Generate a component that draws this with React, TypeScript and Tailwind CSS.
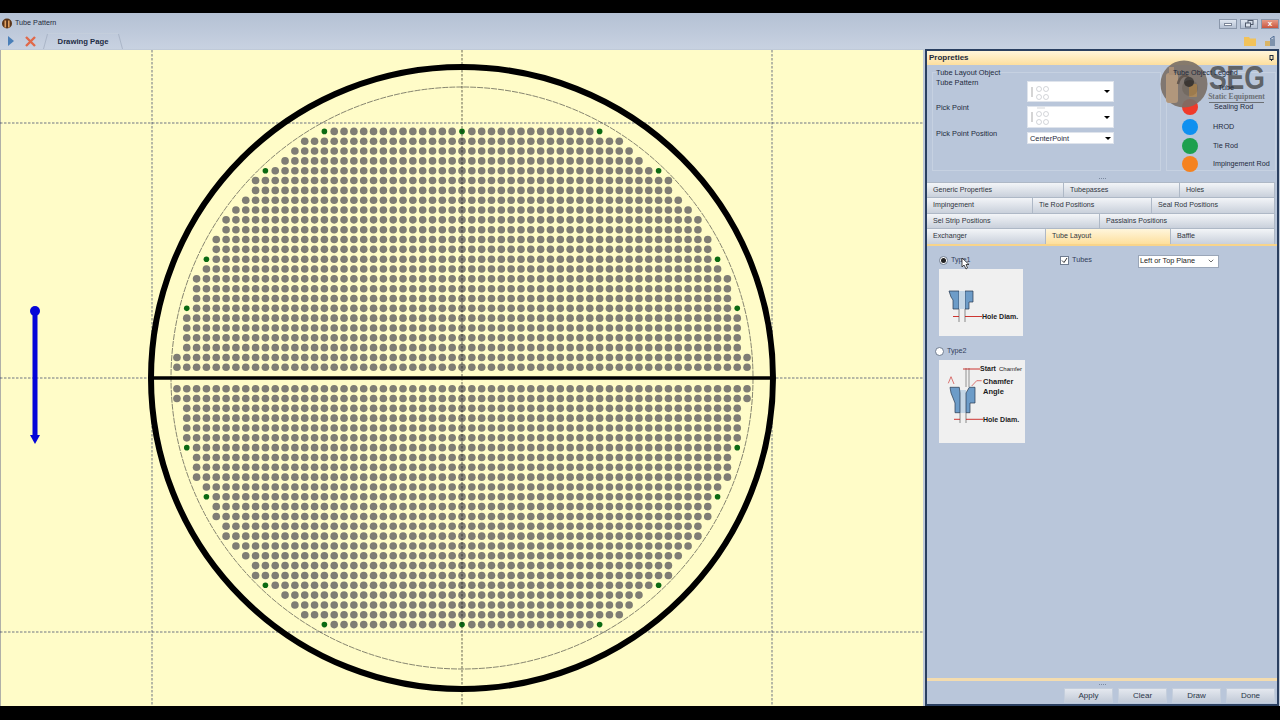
import { ChevronDown } from "lucide-react"

// leftmost column (in pitches from centre) for each tube row, top row first
const rowStart = [14, 16, 17, 18, 20, 21, 21, 22, 23, 24, 24, 25, 25, 26, 26, 27, 27, 27, 28, 28, 28, 28, 28, 29, 29]
const greenRows = [0, 4, 13, 18]
const PITCH = 9.83
const CX = 462
const CY = 378

function tubeDots() {
  const dots: { x: number; y: number; green: boolean }[] = []
  rowStart.forEach((start, r) => {
    const up = 131.4 + r * PITCH
    const down = 624.6 - r * PITCH
    for (let k = -start; k <= start; k++) {
      const green = (greenRows.includes(r) && Math.abs(k) === start) || (r === 0 && k === 0)
      const x = CX + k * PITCH
      dots.push({ x, y: up, green })
      dots.push({ x, y: down, green })
    }
  })
  return dots
}

function Drawing() {
  const dots = tubeDots()
  return (
    <svg viewBox="0 50 923 656" className="w-[923px] h-[656px] shrink-0 bg-[#fffcc8] mt-px">
      <line x1="0.5" y1="50" x2="0.5" y2="706" stroke="#b0b0a8" />
      {dots.map((d, i) => (
        <circle key={i} cx={d.x} cy={d.y} r={d.green ? 2.8 : 3.8} fill={d.green ? "#0b6a12" : "#7f7d74"} />
      ))}
      <g stroke="#2f3a66" strokeWidth="0.7" strokeDasharray="2.5 1.5" fill="none">
        <line x1="0" y1="123" x2="923" y2="123" />
        <line x1="0" y1="378" x2="923" y2="378" />
        <line x1="0" y1="632" x2="923" y2="632" />
        <line x1="152" y1="50" x2="152" y2="706" />
        <line x1="772" y1="50" x2="772" y2="706" />
      </g>
      <line x1={CX} y1="50" x2={CX} y2="706" stroke="#222" strokeWidth="0.7" strokeDasharray="2.5 1.5" />
      <circle cx={CX} cy={CY} r="291" fill="none" stroke="#333" strokeWidth="0.6" strokeDasharray="6 1" />
      <circle cx={CX} cy={CY} r="311" fill="none" stroke="#000" strokeWidth="6" />
      <line x1="150" y1={CY} x2="775" y2={CY} stroke="#000" strokeWidth="3.5" />
      <line x1="35" y1="312" x2="35" y2="436" stroke="#0505d8" strokeWidth="5" />
      <circle cx="35" cy="311" r="5" fill="#0505d8" />
      <path d="M30 435 H40 L35 444 Z" fill="#0505d8" />
    </svg>
  )
}

function WindowButton({ kind }: { kind: "min" | "max" | "close" }) {
  const bg = kind === "close" ? "bg-gradient-to-b from-[#e69a86] to-[#c8553f]" : "bg-gradient-to-b from-[#dfe6f0] to-[#b4c0d2]"
  return (
    <div className={`w-[18px] h-[10px] border border-[#8a97ab] flex items-center justify-center ${bg}`}>
      {kind === "min" && <div className="w-[8px] h-[3px] border border-[#7c8698] bg-white" />}
      {kind === "max" && (
        <svg width="9" height="8" viewBox="0 0 9 8" fill="none" stroke="#4f596b">
          <rect x="3" y="0.5" width="5" height="4" />
          <rect x="0.5" y="3" width="5" height="4" fill="#dfe6f0" />
        </svg>
      )}
      {kind === "close" && <span className="text-white text-[8px] leading-none font-bold">x</span>}
    </div>
  )
}

function TitleBar() {
  return (
    <div className="h-[20px] flex items-center bg-gradient-to-b from-[#b4c1d4] to-[#bfcadb] pl-[2px] pr-px">
      <svg width="10" height="11" viewBox="0 0 10 11">
        <circle cx="5" cy="5.5" r="5" fill="#5a3418" />
        <rect x="2.5" y="2.5" width="1.6" height="7" fill="#e0a060" />
        <rect x="6" y="2.5" width="1.6" height="7" fill="#e0a060" />
      </svg>
      <span className="ml-[3px] text-[7.2px] text-[#1e2a3c]">Tube Pattern</span>
      <div className="ml-auto flex gap-[3px] mt-[2px]">
        <WindowButton kind="min" />
        <WindowButton kind="max" />
        <WindowButton kind="close" />
      </div>
    </div>
  )
}

function Toolbar() {
  return (
    <div className="h-[16px] flex items-center bg-gradient-to-b from-[#bfcadb] to-[#c8d2e1] pl-[8px] pr-[4px]">
      <svg width="6" height="10" viewBox="0 0 6 10">
        <path d="M0 0 L6 5 L0 10 Z" fill="#4a7fb8" />
      </svg>
      <svg width="11" height="11" viewBox="0 0 11 11" className="ml-[11px]">
        <path d="M1 1 L10 10 M10 1 L1 10" stroke="#e0694a" strokeWidth="2.4" />
      </svg>
      <div className="ml-[7px] flex items-center h-[16px]">
        <svg width="5" height="16" viewBox="0 0 5 16">
          <path d="M0.5 16 L4.5 1" stroke="#a3afc2" strokeWidth="0.8" fill="none" />
        </svg>
        <div className="w-[70px] h-[16px] flex items-center justify-center text-[7.7px] font-bold text-[#1d2b44] border-t border-[#c4cedc]">
          Drawing Page
        </div>
        <svg width="5" height="16" viewBox="0 0 5 16">
          <path d="M0.5 1 L4.5 16" stroke="#a3afc2" strokeWidth="0.8" fill="none" />
        </svg>
      </div>
      <div className="ml-auto flex items-center gap-[9px]">
        <svg width="12" height="10" viewBox="0 0 12 10">
          <path d="M0 1 H5 L6 2.5 H12 V10 H0 Z" fill="#f2c25a" />
        </svg>
        <svg width="11" height="11" viewBox="0 0 11 11">
          <rect x="0" y="5" width="5" height="5" fill="#d9b465" />
          <rect x="5" y="3" width="5" height="7" fill="#7f93ad" />
          <path d="M5 3 L9 0 M9 0 V3" stroke="#4d6a92" strokeWidth="1" fill="none" />
        </svg>
      </div>
    </div>
  )
}

function ComboThumb({ h, tall }: { h: string; tall?: boolean }) {
  return (
    <div className={`${h} w-[87px] bg-white border border-[#dfe4ec] flex items-center pl-[3px] pr-[3px] relative`}>
      <svg width="24" height="20" viewBox="0 0 24 20" fill="none" stroke="#a8adb4" strokeWidth="0.5">
        <line x1="1" y1="5" x2="1" y2="15" stroke="#555" />
        <circle cx="8" cy="7" r="2.5" />
        <circle cx="15" cy="7" r="2.5" />
        <circle cx="8" cy="15" r="2.5" />
        <circle cx="15" cy="15" r="2.5" />
        {tall && <line x1="6" y1="1" x2="14" y2="1" />}
      </svg>
      <span className="ml-auto w-0 h-0 border-x-[3px] border-x-transparent border-t-[3px] border-t-black" />
    </div>
  )
}

function TubeLayoutGroup() {
  return (
    <fieldset className="w-[229px] h-[103px] border border-[#c6d1e1] ml-[5px] px-[3px]">
      <legend className="text-[7.4px] leading-[9px] text-[#1e2a3c]">Tube Layout Object</legend>
      <div className="grid grid-cols-[91px_87px] text-[7.4px] leading-[9px] text-[#1e2a3c] gap-y-[4px] mt-[4px]">
        <span className="-mt-[3px]">Tube Pattern</span>
        <ComboThumb h="h-[21px]" />
        <span className="-mt-[3px]">Pick Point</span>
        <ComboThumb h="h-[22px]" tall />
        <span className="-mt-[3px]">Pick Point Position</span>
        <div className="h-[12px] w-[87px] bg-white flex items-center px-[2px] border border-[#dfe4ec]">
          <span>CenterPoint</span>
          <span className="ml-auto w-0 h-0 border-x-[3px] border-x-transparent border-t-[3px] border-t-black" />
        </div>
      </div>
    </fieldset>
  )
}

const legendItems = [
  { name: "Tube", color: "bg-[#3c3c3c]", h: "h-[18px]", text: "ml-[20px]" },
  { name: "Sealing Rod", color: "bg-[#f03a2a]", h: "h-[20px]", text: "ml-[16px]" },
  { name: "HROD", color: "bg-[#0f90f0]", h: "h-[20px]", text: "ml-[15px]" },
  { name: "Tie Rod", color: "bg-[#1da04e]", h: "h-[18px]", text: "ml-[15px]" },
  { name: "Impingement Rod", color: "bg-[#f5821f]", h: "h-[18px]", text: "ml-[15px]" },
]

function LegendGroup() {
  return (
    <fieldset className="w-[110px] h-[103px] border border-[#c6d1e1] ml-[5px]">
      <legend className="ml-[6px] text-[7.2px] leading-[9px] text-[#1e2a3c] relative z-20">Tube Object Legend</legend>
      <div className="flex flex-col pl-[15px] pt-[2px]">
        {legendItems.map((it) => (
          <div key={it.name} className={`${it.h} flex items-center`}>
            <span className={`w-[16px] h-[16px] rounded-full shrink-0 ${it.color}`} />
            <span className={`${it.text} text-[7.2px] text-[#1e2a3c] whitespace-nowrap relative z-20`}>{it.name}</span>
          </div>
        ))}
      </div>
    </fieldset>
  )
}

function Grip() {
  return (
    <div className="h-[7px] flex items-center justify-center gap-px">
      {[0, 1, 2, 3].map((i) => (
        <span key={i} className="w-px h-px bg-[#7c8aa0]" />
      ))}
    </div>
  )
}

const tabRows = [
  [
    { label: "Generic Properties", w: "w-[137px]" },
    { label: "Tubepasses", w: "w-[116px]" },
    { label: "Holes", w: "w-[95px]" },
  ],
  [
    { label: "Impingement", w: "w-[106px]" },
    { label: "Tie Rod Positions", w: "w-[119px]" },
    { label: "Seal Rod Positions", w: "w-[123px]" },
  ],
  [
    { label: "Sel Strip Positions", w: "w-[173px]" },
    { label: "Passlains Positions", w: "w-[175px]" },
  ],
  [
    { label: "Exchanger", w: "w-[119px]" },
    { label: "Tube Layout", w: "w-[125px]", active: true },
    { label: "Baffle", w: "w-[104px]" },
  ],
]

function Tabs() {
  return (
    <div className="w-[348px] flex flex-col">
      {tabRows.map((row, i) => (
        <div key={i} className="flex h-[15.4px]">
          {row.map((t) => (
            <div
              key={t.label}
              className={`${t.w} flex items-center pl-[6px] text-[7.1px] border-r border-t border-[#aeb8c6] rounded-t-[1px] ${
                "active" in t
                  ? "bg-gradient-to-b from-[#fff6dc] to-[#fddf9c] text-[#2f3540]"
                  : "bg-gradient-to-b from-[#f3f5f8] to-[#c9d0db] text-[#2f3540]"
              }`}
            >
              {t.label}
            </div>
          ))}
        </div>
      ))}
    </div>
  )
}

function HoleDiam({ x, y }: { x: number; y: number }) {
  return (
    <text x={x} y={y} fontSize="7" fontWeight="bold" fontFamily="Liberation Sans, sans-serif" fill="#1c1c1c">
      Hole Diam.
    </text>
  )
}

function Type1Thumb() {
  return (
    <svg width="84" height="67" viewBox="0 0 84 67" className="mt-[3px] bg-[#f0f0f0]">
      <path d="M10 22 H20 V40 H14 V31 L12 28 Z" fill="#6d9cc8" stroke="#26384e" strokeWidth="0.7" />
      <path d="M26 22 H34 V33 H30 V40 H26 Z" fill="#6d9cc8" stroke="#26384e" strokeWidth="0.7" />
      <rect x="20" y="22" width="6" height="18" fill="#c4d6e6" />
      <path d="M20 40 V53 M26 40 V53" stroke="#444" strokeWidth="0.6" />
      <path d="M14 47.5 H20 M26 47.5 H43" stroke="#c8201c" strokeWidth="0.9" />
      <HoleDiam x={43} y={50} />
    </svg>
  )
}

function Type2Thumb() {
  return (
    <svg width="86" height="83" viewBox="0 0 86 83" className="mt-[3px] bg-[#f0f0f0]">
      <path d="M27 8 V27 M30 8 V27" stroke="#555" strokeWidth="0.6" />
      <path d="M24 9 H41" stroke="#c8201c" strokeWidth="0.9" />
      <text x="41" y="11" fontSize="7" fontWeight="bold" fontFamily="Liberation Sans, sans-serif" fill="#1c1c1c">Start</text>
      <text x="60" y="11" fontSize="6" fontFamily="Liberation Sans, sans-serif" fill="#1c1c1c">Chamfer</text>
      <text x="44" y="24" fontSize="7.5" fontWeight="bold" fontFamily="Liberation Sans, sans-serif" fill="#1c1c1c">Chamfer</text>
      <text x="44" y="34" fontSize="7.5" fontWeight="bold" fontFamily="Liberation Sans, sans-serif" fill="#1c1c1c">Angle</text>
      <path d="M32.7 26 L37.7 20.7 H42.7" stroke="#c8201c" strokeWidth="0.6" fill="none" />
      <path d="M9.3 23.3 L12 16.7 L15 24" stroke="#c8201c" strokeWidth="0.6" fill="none" />
      <rect x="21" y="30" width="6" height="23" fill="#c4d6e6" />
      <path d="M11 27.3 H20.3 L21 33 V52.7 H16 V43 L12 33 Z" fill="#6d9cc8" stroke="#26384e" strokeWidth="0.7" />
      <path d="M30.3 27.3 H36 V43 H31 V52.7 H27 V33 Z" fill="#6d9cc8" stroke="#26384e" strokeWidth="0.7" />
      <path d="M21 52.7 V63 M27 52.7 V63" stroke="#444" strokeWidth="0.6" />
      <path d="M15 59.3 H21 M27 59.3 H44" stroke="#c8201c" strokeWidth="0.9" />
      <HoleDiam x={44} y={62} />
    </svg>
  )
}

function Radio({ label, checked }: { label: string; checked?: boolean }) {
  return (
    <div className="flex items-center h-[10px] text-[7.2px] text-[#33405a]">
      <span className="w-[9px] h-[9px] rounded-full bg-white border border-[#6f7c90] flex items-center justify-center">
        {checked && <span className="w-[5px] h-[5px] rounded-full bg-[#222]" />}
      </span>
      <span className="ml-[3px]">{label}</span>
    </div>
  )
}

function TubeLayoutTab() {
  return (
    <div className="flex-1 flex pl-[12px] pt-[10px]">
      <div className="w-[121px]">
        <Radio label="Type1" checked />
        <Type1Thumb />
        <div className="mt-[11px] -ml-[4px]">
          <Radio label="Type2" />
        </div>
        <Type2Thumb />
      </div>
      <div className="flex items-start w-[78px]">
        <div className="flex items-center text-[7.3px] text-[#33405a] h-[10px]">
          <span className="w-[9px] h-[9px] bg-white border border-[#6f7c90] flex items-center justify-center">
            <svg width="7" height="7" viewBox="0 0 7 7" fill="none" stroke="#333" strokeWidth="1">
              <path d="M1 3.5 L3 5.5 L6 1" />
            </svg>
          </span>
          <span className="ml-[3px]">Tubes</span>
        </div>
      </div>
      <div className="w-[81px] h-[13px] -mt-[1px] bg-white border border-[#9aa6b8] flex items-center px-[1px] text-[7.3px] text-[#222]">
        Left or Top Plane
        <ChevronDown size={8} className="ml-auto mr-[2px]" />
      </div>
    </div>
  )
}

function Logo() {
  return (
    <div className="absolute left-[1160px] top-[60px] z-10 flex pointer-events-none">
      <svg width="48" height="48" viewBox="0 0 48 48" className="opacity-90">
        <circle cx="24" cy="24" r="23.5" fill="#7a6f66" />
        <rect x="6" y="13" width="12" height="30" rx="3" fill="#b19272" />
        <rect x="9" y="7" width="5" height="8" fill="#a98a6c" />
        <path d="M18 24 C20 15 26 14 29 18" stroke="#5a4c40" strokeWidth="2.5" fill="none" />
        <rect x="29" y="24" width="8" height="13" rx="1" fill="#a8824f" />
        <circle cx="29" cy="22" r="5" fill="#3b3632" />
      </svg>
      <div className="flex flex-col items-center w-[57px]">
        <span className="text-[34px] leading-[31px] font-bold text-[#5f6368] scale-x-[0.78] whitespace-nowrap mt-[2px]">
          SEG
        </span>
        <span className="text-[7.6px] leading-[7px] font-bold text-[#6b6f74] font-['Liberation_Serif',serif] whitespace-nowrap">
          Static Equipment
        </span>
        <span className="w-[55px] h-px bg-[#6b6f74] mt-[2px]" />
      </div>
    </div>
  )
}

function Cursor() {
  return (
    <svg width="9" height="13" viewBox="0 0 9 13" className="absolute left-[961px] top-[257px] z-20">
      <path d="M1 1 V10 L3 8 L5 12 L6.5 11 L5 7.5 H8 Z" fill="#fff" stroke="#222" strokeWidth="0.8" />
    </svg>
  )
}

function PanelButton({ label }: { label: string }) {
  return (
    <div className="w-[49px] h-[15px] flex items-center justify-center text-[8px] text-[#2a3648] border border-[#c4cedc] bg-gradient-to-b from-[#e4e8ef] to-[#c3cbd8]">
      {label}
    </div>
  )
}

function Panel() {
  return (
    <div className="ml-[2px] w-[354px] h-[657px] border-2 border-[#2a3f60] flex flex-col bg-[#b9c6da]">
      <div className="h-[14px] shrink-0 flex items-center justify-between px-[2px] bg-gradient-to-b from-[#fff5da] to-[#fddf9e]">
        <span className="text-[8px] font-bold text-[#1e2a3c]">Propreties</span>
        <svg width="5" height="6" viewBox="0 0 5 6" className="mr-[1px]" fill="none" stroke="#1e2a3c">
          <rect x="1" y="0.5" width="3" height="4" />
          <path d="M2.5 4.5 V6" />
        </svg>
      </div>
      <div className="h-[110px] shrink-0 flex items-start pt-[3px]">
        <TubeLayoutGroup />
        <LegendGroup />
      </div>
      <Grip />
      <Tabs />
      <div className="h-[2px] shrink-0 bg-[#f8d48a]" />
      <TubeLayoutTab />
      <div className="h-[3px] shrink-0 bg-[#f4dcae]" />
      <Grip />
      <div className="flex justify-end gap-[5px] pr-[2px] pb-[1px]">
        <PanelButton label="Apply" />
        <PanelButton label="Clear" />
        <PanelButton label="Draw" />
        <PanelButton label="Done" />
      </div>
    </div>
  )
}

export default function App() {
  return (
    <div className="relative w-[1280px] h-[720px] overflow-hidden bg-black flex flex-col font-['Liberation_Sans',sans-serif]">
      <div className="h-[13px] shrink-0" />
      <TitleBar />
      <Toolbar />
      <div className="flex h-[657px] bg-[#c0cad8]">
        <Drawing />
        <Panel />
      </div>
      <Logo />
      <Cursor />
    </div>
  )
}
